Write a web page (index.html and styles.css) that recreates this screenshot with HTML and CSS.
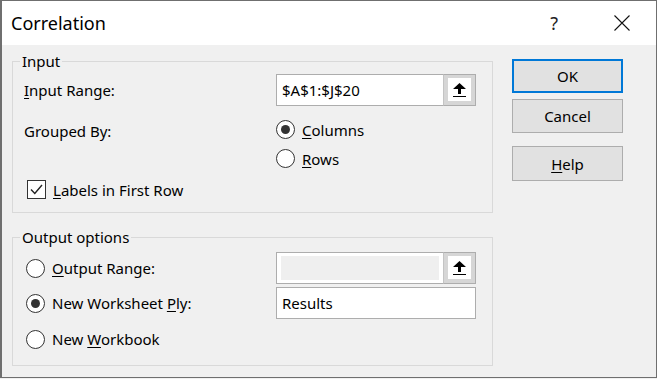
FILE: index.html
```html
<!DOCTYPE html>
<html lang="en">
  <head>
    <meta charset="UTF-8" />
    <title>Correlation</title>
    <link rel="stylesheet" href="styles.css">
  </head>
  <body>
    <div class="window">
      <header class="titlebar">
        <span class="title">Correlation</span>
        <span class="help-glyph">?</span>
        <svg class="close" width="16" height="16" viewBox="0 0 16 16">
          <path d="M0.5 0.5 L15.5 15.5 M15.5 0.5 L0.5 15.5" stroke="#111" stroke-width="1.1" fill="none" />
        </svg>
      </header>

      <div class="dialog">
        <div class="main">
          <!-- Input group -->
          <div class="group group-input">
            <span class="group-title">Input</span>
            <div class="row row-range">
              <span class="label"><u>I</u>nput Range:</span>
              <div class="field">
                <span class="field-text">$A$1:$J$20</span>
                <span class="pick">
                  <span class="pick-face">
                    <svg width="13" height="14" viewBox="0 0 13 14"><polygon points="6.5,0 13,6 8,6 8,11 5,11 5,6 0,6" fill="#000" /><rect x="0" y="13" width="13" height="1" fill="#000" /></svg>
                  </span>
                </span>
              </div>
            </div>
            <div class="row row-radio">
              <span class="label label-grouped">Grouped By:</span>
              <label class="option"><span class="radio checked"></span><span><u>C</u>olumns</span></label>
            </div>
            <div class="row row-radio">
              <span class="label"></span>
              <label class="option"><span class="radio"></span><span><u>R</u>ows</span></label>
            </div>
            <div class="row row-check">
              <label class="option">
                <span class="checkbox">
                  <svg width="17" height="17" viewBox="0 0 17 17"><path d="M3 8.5 L6.8 12.5 L14 4" stroke="#222" stroke-width="1.4" fill="none" /></svg>
                </span>
                <span><u>L</u>abels in First Row</span>
              </label>
            </div>
          </div>

          <!-- Output group -->
          <div class="group group-output">
            <span class="group-title">Output options</span>
            <div class="row row-out">
              <label class="option"><span class="radio"></span><span><u>O</u>utput Range:</span></label>
              <div class="field field-disabled">
                <span class="field-text"><span class="field-fill"></span></span>
                <span class="pick">
                  <span class="pick-face">
                    <svg width="13" height="14" viewBox="0 0 13 14"><polygon points="6.5,0 13,6 8,6 8,11 5,11 5,6 0,6" fill="#000" /><rect x="0" y="13" width="13" height="1" fill="#000" /></svg>
                  </span>
                </span>
              </div>
            </div>
            <div class="row row-out">
              <label class="option"><span class="radio checked"></span><span>New Worksheet <u>P</u>ly:</span></label>
              <div class="field">
                <span class="field-text">Results</span>
              </div>
            </div>
            <div class="row row-out row-last">
              <label class="option"><span class="radio"></span><span>New <u>W</u>orkbook</span></label>
            </div>
          </div>
        </div>

        <div class="buttons">
          <button class="btn btn-default">OK</button>
          <button class="btn">Cancel</button>
          <button class="btn btn-help"><u>H</u>elp</button>
        </div>
      </div>
    </div>
  </body>
</html>
```

FILE: styles.css
```css
html,
body {
  margin: 0;
  padding: 0;
  background-color: #f0f0f0;
}

body {
  font-family: "Noto Sans", "Open Sans", sans-serif;
  font-size: 15px;
  color: #000;
}

u {
  text-decoration-thickness: 1px;
  text-underline-offset: 2px;
}

.window {
  width: 657px;
  height: 378px;
  box-sizing: border-box;
  border: 1px solid #6f6f6f;
  border-left-width: 2px;
  background-color: #f0f0f0;
  display: flex;
  flex-direction: column;
}

/* title bar */
.titlebar {
  height: 44px;
  flex-shrink: 0;
  background-color: #fff;
  display: flex;
  align-items: center;
  padding-left: 9px;
}

.title {
  font-size: 18px;
  flex: 1;
  padding-bottom: 1px;
}

.help-glyph {
  font-size: 18px;
  color: #222;
  margin-right: 56px;
  padding-bottom: 1px;
}

.close {
  margin-right: 26px;
}

/* body */
.dialog {
  flex: 1;
  display: flex;
  align-items: flex-start;
  padding-left: 10px;
}

.main {
  width: 481px;
  padding-top: 16px;
  display: flex;
  flex-direction: column;
  gap: 24px;
}

.group {
  position: relative;
  box-sizing: border-box;
  border: 1px solid #d9d9d9;
  padding-left: 11px;
}

.group-title {
  position: absolute;
  top: -11px;
  left: 7px;
  padding: 0 2px;
  line-height: 20px;
  background-color: #f0f0f0;
}

.group-input {
  height: 152px;
  padding-top: 12px;
}

.group-output {
  height: 129px;
  padding-top: 14px;
}

.row {
  display: flex;
  align-items: center;
}

.label {
  width: 252px;
  flex-shrink: 0;
}

.label-grouped {
  padding-top: 3px;
}

.row-range {
  height: 32px;
  margin-bottom: 9px;
}

.row-radio {
  height: 29px;
}

.row-check {
  height: 29px;
  margin-top: 2px;
  padding-left: 3px;
}

.row-out {
  height: 32px;
  margin-bottom: 3px;
  padding-left: 2px;
}

.row-out .option {
  width: 250px;
  flex-shrink: 0;
}

.row-last {
  margin-top: 4px;
}

.option {
  display: flex;
  align-items: center;
  gap: 7px;
}

.radio {
  width: 19px;
  height: 19px;
  box-sizing: border-box;
  border: 1.3px solid #333;
  border-radius: 50%;
  background-color: #fff;
  display: flex;
  align-items: center;
  justify-content: center;
}

.radio.checked::after {
  content: "";
  width: 9px;
  height: 9px;
  border-radius: 50%;
  background-color: #333;
}

.checkbox {
  width: 19px;
  height: 19px;
  box-sizing: border-box;
  border: 1px solid #333;
  background-color: #fff;
  display: flex;
}

/* text fields with the range picker */
.field {
  width: 200px;
  height: 32px;
  box-sizing: border-box;
  border: 1px solid #adadad;
  background-color: #fff;
  display: flex;
}

.field-text {
  flex: 1;
  display: flex;
  align-items: center;
  padding-left: 5px;
}

.field-disabled .field-text {
  padding: 3px 4px;
  align-items: stretch;
}

.field-fill {
  flex: 1;
  background-color: #efefef;
}

.pick {
  width: 33px;
  box-sizing: border-box;
  background-color: #d6d6d6;
  padding: 3px 4px 4px 4px;
  display: flex;
  margin: -1px -1px -1px 0;
  border: 1px solid #adadad;
  border-left-color: #c4c4c4;
}

.pick-face {
  flex: 1;
  background-color: #fff;
  display: flex;
  align-items: center;
  justify-content: center;
}

/* command buttons */
.buttons {
  margin-left: 19px;
  padding-top: 14px;
  display: flex;
  flex-direction: column;
  width: 111px;
}

.btn {
  font-family: inherit;
  font-size: 15px;
  color: #000;
  height: 34px;
  background-color: #e1e1e1;
  border: 1px solid #adadad;
  margin-bottom: 6px;
  padding: 0;
}

.btn-default {
  border: 2px solid #0078d7;
}

.btn-help {
  margin-top: 7px;
  height: 35px;
}
```
